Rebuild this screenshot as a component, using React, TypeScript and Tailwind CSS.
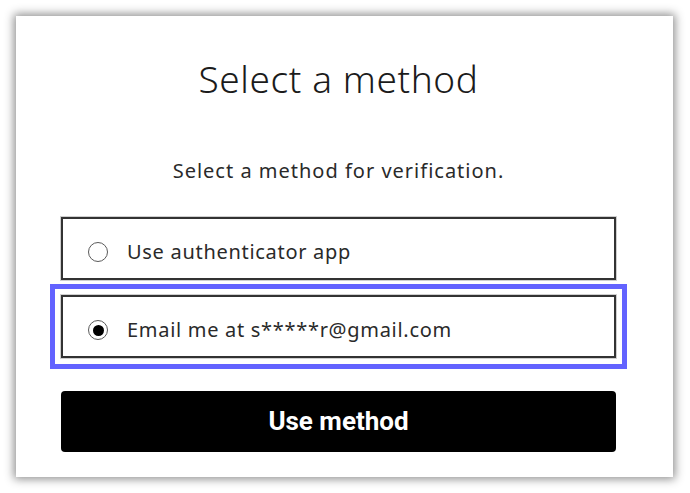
export default function App() {
  return (
    <div className="min-h-[493px] w-[690px] bg-white pl-[16px] pt-[16px]">
      <div
        className="flex h-[461px] w-[657px] flex-col bg-white pl-[45px] shadow-[0_0_9px_2px_rgba(0,0,0,0.45)]"
        style={{ fontFamily: '"Noto Sans", "Open Sans", sans-serif' }}
      >
        <div className="w-[555px]">
          <h1 className="mt-[42px] text-center text-[37px] leading-[42px] font-light tracking-[0.6px] text-[#1b1b1b]">
            Select a method
          </h1>
          <p className="mt-[59px] text-center text-[20px] leading-[24px] tracking-[1px] text-[#2a2a2a]">
            Select a method for verification.
          </p>

          <div className="mt-[34px] flex flex-col gap-[15px]">
            <MethodOption label="Use authenticator app" selected={false} />
            <MethodOption label="Email me at s*****r@gmail.com" selected highlight />
          </div>

          <button
            className="mt-[33px] flex h-[61px] w-full items-center justify-center rounded-[4px] bg-black text-[26px] font-bold text-white"
            style={{ fontFamily: 'Roboto, "Liberation Sans", sans-serif' }}
          >
            Use method
          </button>
        </div>
      </div>
    </div>
  );
}

function MethodOption({
  label,
  selected,
  highlight,
}: {
  label: string;
  selected: boolean;
  highlight?: boolean;
}) {
  return (
    <div
      className={`flex h-[63px] items-center border-2 border-[#333333] pt-[7px] pl-[25px] shadow-[0_0_0_1px_#cfcfcf] ${
        highlight ? "outline-[5px] outline-offset-[6px] outline-solid outline-[#6363ff]" : ""
      }`}
    >
      <span className="flex h-[20px] w-[20px] items-center justify-center rounded-full border-[1.5px] border-[#5a5a5a] bg-white">
        {selected && <span className="h-[11px] w-[11px] rounded-full bg-black" />}
      </span>
      <span className="ml-[19px] text-[20px] tracking-[0.7px] text-[#2a2a2a]">{label}</span>
    </div>
  );
}
